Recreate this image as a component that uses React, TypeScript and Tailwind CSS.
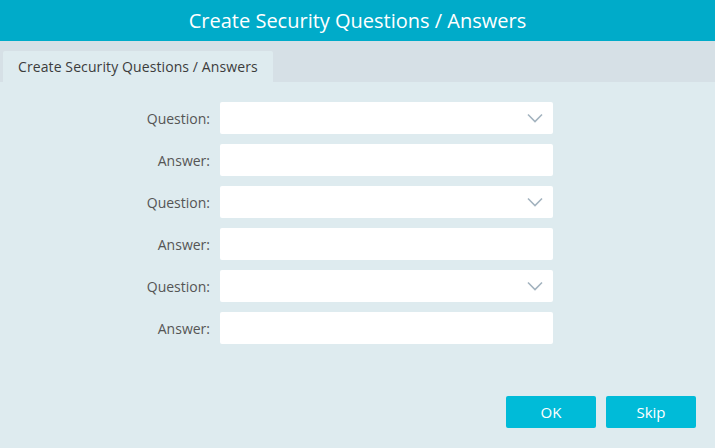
const rows = ["Question:", "Answer:", "Question:", "Answer:", "Question:", "Answer:"];

function Chevron() {
  return (
    <svg width="16" height="10" viewBox="0 0 16 10" fill="none" className="shrink-0">
      <path d="M1 1.5 L8 8.5 L15 1.5" stroke="#a3b3bf" strokeWidth="1.6" />
    </svg>
  );
}

export default function App() {
  return (
    <div
      className="flex h-[448px] w-[715px] flex-col bg-[#deebef] text-[#555]"
      style={{ fontFamily: '"Open Sans", "Noto Sans", sans-serif' }}
    >
      <div className="flex h-[41px] items-center justify-center bg-[#00abc9] text-[20px] text-white">
        Create Security Questions / Answers
      </div>

      <div className="flex h-[41px] items-end bg-[#d6e0e6] pl-[3px]">
        <div className="flex h-[31px] w-[270px] items-center rounded-t-[2px] bg-[#deebef] pl-[15px] text-[14px] tracking-[0.1px] text-[#3c3c3c]">
          Create Security Questions / Answers
        </div>
      </div>

      <div className="flex flex-col gap-[10px] pt-[20px]">
        {rows.map((label, i) => (
          <div key={i} className="flex items-center">
            <div className="w-[210px] text-right text-[14px]">{label}</div>
            <div className="ml-[10px] flex h-[32px] w-[333px] items-center justify-end rounded-[2px] bg-white pr-[10px]">
              {label === "Question:" && <Chevron />}
            </div>
          </div>
        ))}
      </div>

      <div className="mt-auto flex justify-end gap-[10px] pb-[20px] pr-[19px]">
        <button className="h-[32px] w-[90px] rounded-[2px] bg-[#00bbd8] text-[15px] text-white">OK</button>
        <button className="h-[32px] w-[90px] rounded-[2px] bg-[#00bbd8] text-[15px] text-white">Skip</button>
      </div>
    </div>
  );
}
